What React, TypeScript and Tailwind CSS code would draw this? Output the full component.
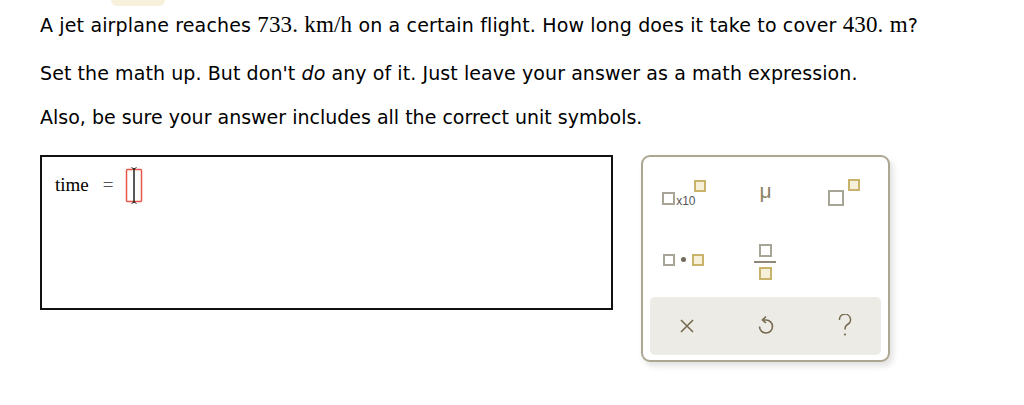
import React from "react";

const serif = "font-['Liberation_Serif','Times_New_Roman',serif]";

// small placeholder square used in the palette buttons
const Slot = ({ kind, size = 12 }: { kind: "gray" | "gold"; size?: number }) => (
  <span
    className={`block border-2 ${
      kind === "gray" ? "border-[#a8a496] bg-white" : "border-[#c9b36a] bg-[#f6f0d8]"
    }`}
    style={{ width: size, height: size }}
  />
);

const Cursor = () => (
  <svg width="20" height="37" viewBox="0 0 20 37" className="block">
    <rect x="2.5" y="2.5" width="15" height="32" rx="1" fill="none" stroke="#e8574a" strokeWidth="1.5" />
    <line x1="10" y1="1" x2="10" y2="36" stroke="#222" strokeWidth="1.5" />
    <path d="M7.5 0.5 L10 2 L12.5 0.5 M7.5 36.5 L10 35 L12.5 36.5" stroke="#222" strokeWidth="1" fill="none" />
  </svg>
);

export default function App() {
  return (
    <div className="w-[1024px] h-[405px] bg-white text-black text-[19px] font-['DejaVu_Sans','Verdana',sans-serif] overflow-hidden">
      <div className="ml-[111px] w-[54px] h-[6px] bg-[#f7f0da] rounded-b-[8px]" />

      <div className="pl-[40px]">
        <p className="mt-[8px] leading-[22px] whitespace-nowrap tracking-[0.15px]">
          A jet airplane reaches <span className={`${serif} text-[23px]`}>733.</span>{" "}
          <span className={`${serif} text-[23px]`}>km/h</span> on a certain flight. How long does it take to cover{" "}
          <span className={`${serif} text-[23px]`}>430.</span> <span className={`${serif} text-[23px]`}>m</span>?
        </p>
        <p className="mt-[26px] leading-[22px] whitespace-nowrap tracking-[0.08px]">
          Set the math up. But don't <i>do</i> any of it. Just leave your answer as a math expression.
        </p>
        <p className="mt-[22px] leading-[22px] whitespace-nowrap">
          Also, be sure your answer includes all the correct unit symbols.
        </p>

        <div className="mt-[27px] flex items-start gap-[28px]">
          {/* answer box */}
          <div className="w-[573px] h-[155px] border-2 border-[#111] pl-[13px] pt-[10px]">
            <div className={`flex items-center ${serif} text-[19px]`}>
              <span>time</span>
              <span className="ml-[14px] text-[#555]">=</span>
              <span className="ml-[10px]">
                <Cursor />
              </span>
            </div>
          </div>

          {/* palette */}
          <div className="w-[249px] h-[207px] border-2 border-[#ada690] rounded-[9px] shadow-[3px_4px_6px_rgba(0,0,0,0.12)] bg-white flex flex-col">
            <div className="grid grid-cols-3 px-[6px] pt-[21px] h-[72px]">
              <div className="flex items-start justify-center pr-[8px]">
                <span className="flex mt-[14px]"><Slot kind="gray" size={13} /></span>
                <span className="block mt-[17px] ml-[1px] text-[12px] leading-none text-[#555] font-['Liberation_Sans',sans-serif]">x10</span>
                <span className="flex mt-[2px] -ml-[2px]"><Slot kind="gold" size={12} /></span>
              </div>
              <div className="flex justify-center">
                <span className="block mt-[2px] text-[21px] leading-none text-[#8b8264] font-['Liberation_Sans',sans-serif]">μ</span>
              </div>
              <div className="flex items-start justify-center pl-[2px]">
                <span className="flex mt-[12px]"><Slot kind="gray" size={16} /></span>
                <span className="flex mt-[1px] ml-[4px]"><Slot kind="gold" size={12} /></span>
              </div>
            </div>
            <div className="grid grid-cols-3 px-[6px] h-[69px]">
              <div className="flex items-center justify-center gap-[6px] pb-[6px] pr-[8px]">
                <Slot kind="gray" size={12} />
                <span className="w-[5px] h-[5px] rounded-full bg-[#6f6a5a]" />
                <Slot kind="gold" size={12} />
              </div>
              <div className="flex flex-col items-center pt-[16px]">
                <Slot kind="gray" size={13} />
                <span className="my-[4px] w-[22px] h-[2px] bg-[#8f8878]" />
                <Slot kind="gold" size={13} />
              </div>
              <div />
            </div>
            <div className="mx-[7px] mt-auto mb-[5px] h-[59px] rounded-[5px] bg-[#ecebe6] grid grid-cols-3 items-center text-[#766b4f]">
              <div className="flex justify-center pr-[4px]">
                <svg width="16" height="16" viewBox="0 0 16 16">
                  <path d="M2 2 L14 14 M14 2 L2 14" stroke="currentColor" strokeWidth="1.6" fill="none" />
                </svg>
              </div>
              <div className="flex justify-center">
                <svg width="18" height="22" viewBox="0 0 18 22">
                  <path d="M6 5 L9 5 A6.5 6.5 0 1 1 2.5 11.5" stroke="currentColor" strokeWidth="1.6" fill="none" />
                  <path d="M9 1.5 L5.5 5 L9 8" stroke="currentColor" strokeWidth="1.6" fill="none" />
                </svg>
              </div>
              <div className="flex justify-center pl-[4px]">
                <svg width="14" height="23" viewBox="0 0 14 23">
                  <path d="M1.5 6 A5.5 5.5 0 1 1 9.5 10.5 C7.5 11.5 7 12.5 7 15.5" stroke="currentColor" strokeWidth="1.5" fill="none" />
                  <circle cx="7" cy="20.5" r="1.1" fill="currentColor" />
                </svg>
              </div>
            </div>
          </div>
        </div>
      </div>
    </div>
  );
}
